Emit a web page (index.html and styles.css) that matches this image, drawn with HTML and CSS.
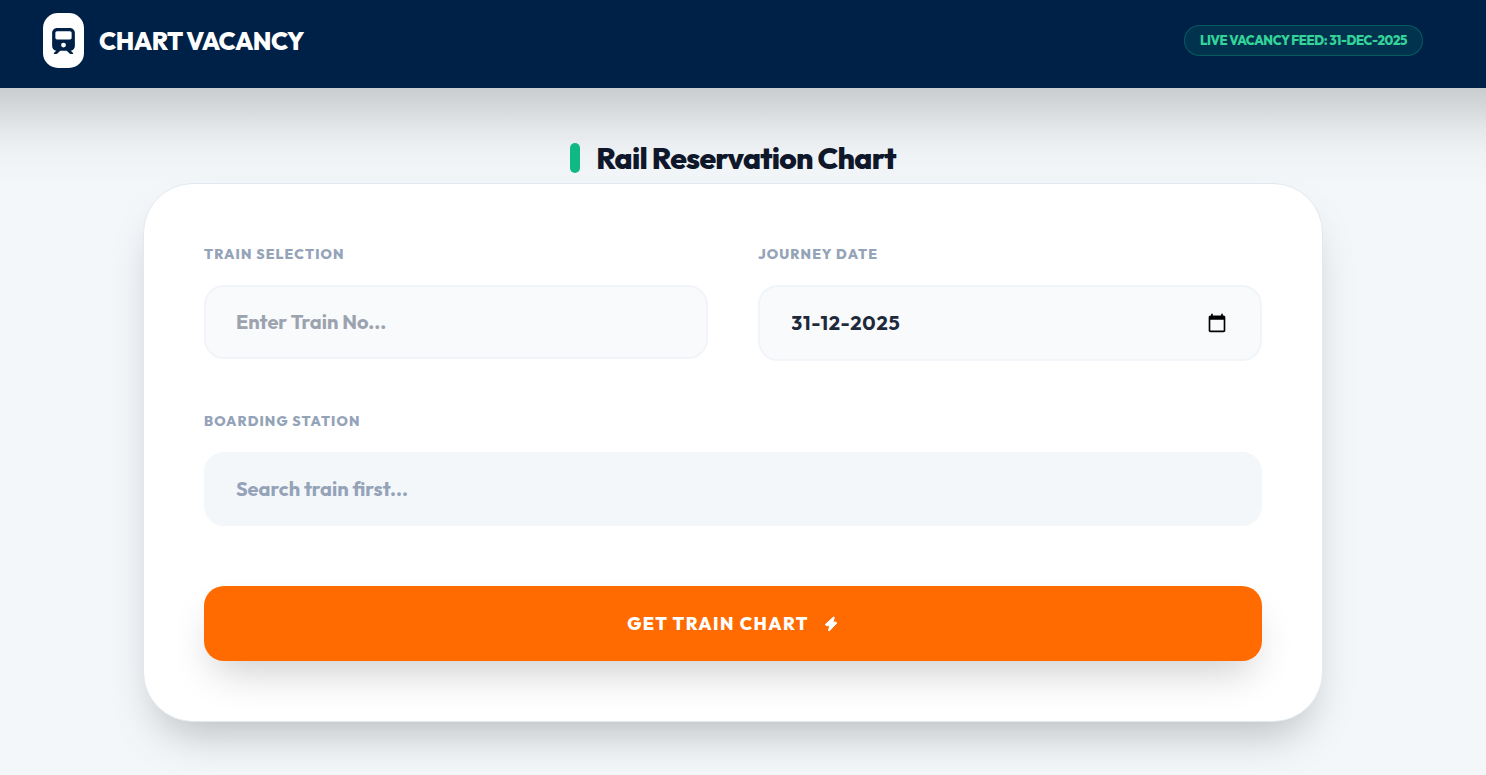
FILE: index.html
```html
<!DOCTYPE html>
<html lang="en">

<head>
    <meta charset="UTF-8">
    <meta name="viewport" content="width=device-width, initial-scale=1.0">
    <title>Chart Vacancy</title>
    <link rel="stylesheet" href="styles.css">
</head>

<body>
    <header class="navbar">
        <div class="brand">
            <span class="brand-logo">
                <svg viewBox="0 0 448 512" aria-hidden="true">
                    <path fill-rule="evenodd" d="M96 0C43 0 0 43 0 96V352c0 48 35.2 87.7 81.1 94.9l-46 46C28.1 499.9 33.1 512 43 512H82.7c8.5 0 16.6-3.4 22.6-9.4L160 448H288l54.6 54.6c6 6 14.1 9.4 22.6 9.4H405c10 0 15-12.1 7.9-19.1l-46-46c46-7.1 81.1-46.9 81.1-94.9V96c0-53-43-96-96-96H96zM64 96c0-17.7 14.3-32 32-32H352c17.7 0 32 14.3 32 32v96c0 17.7-14.3 32-32 32H96c-17.7 0-32-14.3-32-32V96zM224 288a48 48 0 1 1 0 96 48 48 0 1 1 0-96z"/>
                </svg>
            </span>
            <h1>CHART VACANCY</h1>
        </div>
        <div class="live-badge">LIVE VACANCY FEED: 31-DEC-2025</div>
    </header>

    <main class="container">
        <h2 class="title"><span class="title-bar"></span>Rail Reservation Chart</h2>

        <form class="card">
            <div class="form-grid">
                <div class="field">
                    <label for="trainNo">TRAIN SELECTION</label>
                    <input type="text" id="trainNo" placeholder="Enter Train No...">
                </div>
                <div class="field">
                    <label for="journeyDate">JOURNEY DATE</label>
                    <div class="date-box">
                        <input type="text" id="journeyDate" value="31-12-2025">
                        <button type="button" class="date-btn" aria-label="Pick a date">
                            <svg viewBox="0 0 24 24" aria-hidden="true">
                                <path fill-rule="evenodd" d="M20 3h-1V1h-2v2H7V1H5v2H4C2.9 3 2 3.9 2 5v16c0 1.1.9 2 2 2h16c1.1 0 2-.9 2-2V5c0-1.1-.9-2-2-2zM20 21H4V8h16z"/>
                            </svg>
                        </button>
                    </div>
                </div>
                <div class="field full">
                    <label for="station">BOARDING STATION</label>
                    <input type="text" id="station" class="locked" placeholder="Search train first..." disabled>
                </div>
            </div>

            <button type="button" class="submit-btn">
                GET TRAIN CHART
                <svg viewBox="0 0 16 18" aria-hidden="true">
                    <path d="M10.500 2L2.500 9.300L3 10.500L6.800 10.800L5.500 15.500L6.500 15.700L13.600 8.300L13.200 7.200L9.800 6.900L11.400 2.500Z"/>
                </svg>
            </button>
        </form>
    </main>
</body>

</html>
```
FILE: styles.css
```css
/* Global Styles */
* {
    box-sizing: border-box;
}

body {
    font-family: Outfit, Lato, sans-serif;
    margin: 0;
    background-color: #f3f7fa;
    color: #1e293b;
}

h1, h2 {
    margin: 0;
}

/* Top bar */
.navbar {
    display: flex;
    justify-content: space-between;
    align-items: center;
    padding: 13px 63px 20px 43px;
    background-color: #002147;
}

.brand {
    display: flex;
    align-items: center;
    gap: 15px;
}

.brand-logo {
    display: flex;
    align-items: center;
    justify-content: center;
    width: 41px;
    height: 55px;
    background-color: #fff;
    border-radius: 15px;
}

.brand-logo svg {
    width: 23px;
    height: 26px;
    fill: #002147;
}

.brand h1 {
    color: #fff;
    font-size: 25px;
    font-weight: 800;
    line-height: 30px;
    letter-spacing: -0.02em;
}

.live-badge {
    padding: 5px 15px;
    border: 1px solid rgba(16, 185, 129, 0.3);
    border-radius: 20px;
    background-color: rgba(16, 185, 129, 0.12);
    color: #34d399;
    font-size: 13px;
    font-weight: 800;
    line-height: 19px;
    letter-spacing: -0.03em;
}

/* Page, with the bar's shade running down from the top */
.container {
    padding: 50px 63px 50px 43px;
    background: linear-gradient(#cacdd0 0, #d5d9db 20px, #e4e8ea 42px, #eef2f4 65px, #f3f7fa 100px);
}

.title {
    display: flex;
    align-items: center;
    justify-content: center;
    gap: 16px;
    margin-bottom: 5px;
    color: #0f172a;
    font-size: 30px;
    font-weight: 800;
    line-height: 40px;
    letter-spacing: -0.025em;
}

.title-bar {
    width: 10px;
    height: 30px;
    border-radius: 5px;
    background-color: #10b981;
}

.card {
    max-width: 1180px;
    margin: 0 auto;
    padding: 60px;
    border: 1px solid #e2e8f0;
    border-radius: 50px;
    background-color: #fff;
    box-shadow: 0 25px 45px -15px rgba(0, 0, 0, 0.25);
}

.form-grid {
    display: grid;
    grid-template-columns: 1fr 1fr;
    gap: 50px;
    align-items: start;
    margin-bottom: 60px;
}

.full {
    grid-column: 1 / -1;
}

.field label {
    display: block;
    margin-bottom: 21px;
    color: #94a3b8;
    font-size: 14px;
    font-weight: 800;
    line-height: 20px;
    letter-spacing: 0.08em;
}

.field input {
    display: block;
    width: 100%;
    height: 74px;
    padding: 0 30px 2px;
    border: 2px solid #f1f5f9;
    border-radius: 20px;
    background-color: #f8fafc;
    color: #1e293b;
    font-family: inherit;
    font-size: 20px;
    font-weight: 700;
}

.field input::placeholder {
    color: #9ca3af;
}

.field .locked {
    border-color: #f3f7fa;
    background-color: #f3f7fa;
}

.field .locked::placeholder {
    color: #94a3b8;
}

.date-box {
    display: flex;
    align-items: center;
    height: 76px;
    padding: 0 33px 0 31px;
    border: 2px solid #f1f5f9;
    border-radius: 20px;
    background-color: #f8fafc;
}

.date-box input {
    flex: 1;
    height: 40px;
    padding: 0 0 2px;
    border: none;
    background: none;
    letter-spacing: 0.04em;
}

.date-btn {
    display: flex;
    padding: 0;
    border: none;
    background: none;
    cursor: pointer;
}

.date-btn svg {
    width: 20px;
    height: 20px;
}

.submit-btn {
    display: flex;
    align-items: center;
    justify-content: center;
    gap: 14px;
    width: 100%;
    height: 75px;
    border: none;
    border-radius: 20px;
    background-color: #ff6b00;
    box-shadow: 0 20px 40px -10px rgba(0, 0, 0, 0.2);
    color: #fff;
    font-family: inherit;
    font-size: 18px;
    font-weight: 800;
    letter-spacing: 0.08em;
    cursor: pointer;
}

.submit-btn svg {
    width: 16px;
    height: 18px;
    fill: #fff;
    stroke: #fff;
    stroke-width: 1;
    stroke-linejoin: round;
}

@media (max-width: 768px) {
    .navbar,
    .container {
        padding-left: 20px;
        padding-right: 20px;
    }

    .card {
        padding: 30px;
    }

    .form-grid {
        grid-template-columns: 1fr;
    }
}
```
